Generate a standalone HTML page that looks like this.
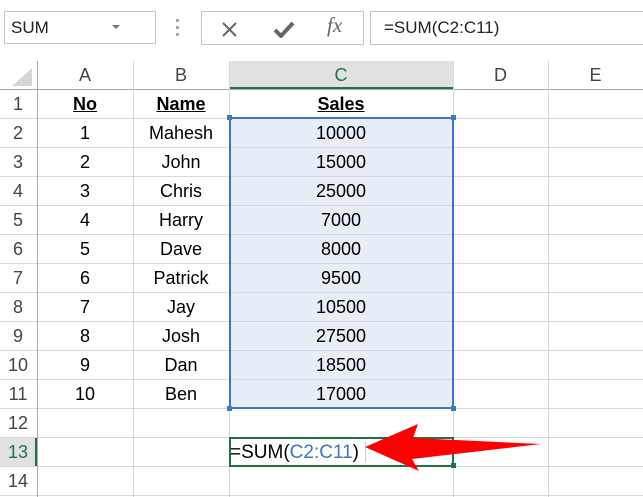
<!DOCTYPE html>
<html><head><style>
body{margin:0;width:643px;height:497px;background:#fff;position:relative;overflow:hidden;font-family:"Liberation Sans",sans-serif}
.a{position:absolute}
.c{position:absolute;text-align:center;font-size:18px;color:#000;height:29px;line-height:31px}
.rh{position:absolute;left:0;width:36px;text-align:center;font-size:18px;color:#444;height:29px;line-height:30px}
.ch{position:absolute;top:61px;height:28px;line-height:29px;text-align:center;font-size:18px;color:#444}
.h{position:absolute;left:0;width:643px;height:1px;background:#d8d8d8}
.v{position:absolute;top:61px;height:436px;width:1px;background:#d8d8d8}
b{text-decoration:underline}
</style></head><body>
<div class="a" style="left:4px;top:11px;width:152px;height:33px;border:1px solid #c6c6c6;box-sizing:border-box;font-size:17px;line-height:31px;padding-left:6px;color:#222">SUM</div>
<div class="a" style="left:112px;top:25px;width:0;height:0;border-left:4px solid transparent;border-right:4px solid transparent;border-top:4px solid #777"></div>
<div class="a" style="left:176px;top:19px;width:3px;height:18px;background:repeating-linear-gradient(#aaa 0 3px,transparent 3px 7px)"></div>
<div class="a" style="left:201px;top:11px;width:163px;height:34px;border:1px solid #c6c6c6;box-sizing:border-box"></div>
<svg class="a" style="left:220px;top:20px" width="20" height="18"><path d="M3 3L16 16M16 3L3 16" stroke="#666" stroke-width="2"/></svg>
<svg class="a" style="left:272px;top:20px" width="24" height="18"><path d="M3 10L9 16L21 3" stroke="#666" stroke-width="4" fill="none"/></svg>
<div class="a" style="left:327px;top:13px;font-family:'Liberation Serif',serif;font-style:italic;font-size:21px;color:#666">fx</div>
<div class="a" style="left:370px;top:11px;width:290px;height:34px;border:1px solid #c6c6c6;box-sizing:border-box;font-size:17px;line-height:32px;padding-left:13px;color:#222">=SUM(C2:C11)</div>

<div class="a" style="left:229px;top:118px;width:224px;height:291px;background:#e8eef7"></div>
<div class="a" style="left:229px;top:61px;width:224px;height:28px;background:#e1e1e1"></div>
<div class="a" style="left:229px;top:87px;width:224px;height:2px;background:#217346"></div>
<div class="a" style="left:0;top:437px;width:36px;height:29px;background:#e1e1e1"></div>
<div class="a" style="left:35px;top:437px;width:2px;height:29px;background:#217346"></div>
<svg class="a" style="left:10px;top:66px" width="24" height="22"><path d="M22 2V20H2Z" fill="#d6d6d6"/></svg>

<div class="h" style="top:89px;background:#a9a9a9"></div>
<div class="h" style="top:118px"></div><div class="h" style="top:147px"></div><div class="h" style="top:176px"></div><div class="h" style="top:205px"></div><div class="h" style="top:234px"></div><div class="h" style="top:263px"></div><div class="h" style="top:292px"></div><div class="h" style="top:321px"></div><div class="h" style="top:350px"></div><div class="h" style="top:379px"></div><div class="h" style="top:408px"></div><div class="h" style="top:437px"></div><div class="h" style="top:466px"></div><div class="h" style="top:495px"></div>
<div class="v" style="left:37px;background:#a9a9a9"></div><div class="v" style="left:133px"></div><div class="v" style="left:229px"></div><div class="v" style="left:453px"></div><div class="v" style="left:548px"></div>

<div class="ch" style="left:37px;width:96px">A</div>
<div class="ch" style="left:133px;width:96px">B</div>
<div class="ch" style="left:229px;width:224px;color:#217346">C</div>
<div class="ch" style="left:453px;width:95px">D</div>
<div class="ch" style="left:548px;width:95px">E</div>

<div class="rh" style="top:89px">1</div><div class="rh" style="top:118px">2</div><div class="rh" style="top:147px">3</div><div class="rh" style="top:176px">4</div><div class="rh" style="top:205px">5</div><div class="rh" style="top:234px">6</div><div class="rh" style="top:263px">7</div><div class="rh" style="top:292px">8</div><div class="rh" style="top:321px">9</div><div class="rh" style="top:350px">10</div><div class="rh" style="top:379px">11</div><div class="rh" style="top:408px">12</div><div class="rh" style="top:437px;color:#217346">13</div><div class="rh" style="top:466px">14</div>

<div class="c" style="left:37px;width:96px;top:89px"><b>No</b></div>
<div class="c" style="left:133px;width:96px;top:89px"><b>Name</b></div>
<div class="c" style="left:229px;width:224px;top:89px"><b>Sales</b></div>

<div class="c" style="left:37px;width:96px;top:118px">1</div><div class="c" style="left:133px;width:96px;top:118px">Mahesh</div><div class="c" style="left:229px;width:224px;top:118px">10000</div>
<div class="c" style="left:37px;width:96px;top:147px">2</div><div class="c" style="left:133px;width:96px;top:147px">John</div><div class="c" style="left:229px;width:224px;top:147px">15000</div>
<div class="c" style="left:37px;width:96px;top:176px">3</div><div class="c" style="left:133px;width:96px;top:176px">Chris</div><div class="c" style="left:229px;width:224px;top:176px">25000</div>
<div class="c" style="left:37px;width:96px;top:205px">4</div><div class="c" style="left:133px;width:96px;top:205px">Harry</div><div class="c" style="left:229px;width:224px;top:205px">7000</div>
<div class="c" style="left:37px;width:96px;top:234px">5</div><div class="c" style="left:133px;width:96px;top:234px">Dave</div><div class="c" style="left:229px;width:224px;top:234px">8000</div>
<div class="c" style="left:37px;width:96px;top:263px">6</div><div class="c" style="left:133px;width:96px;top:263px">Patrick</div><div class="c" style="left:229px;width:224px;top:263px">9500</div>
<div class="c" style="left:37px;width:96px;top:292px">7</div><div class="c" style="left:133px;width:96px;top:292px">Jay</div><div class="c" style="left:229px;width:224px;top:292px">10500</div>
<div class="c" style="left:37px;width:96px;top:321px">8</div><div class="c" style="left:133px;width:96px;top:321px">Josh</div><div class="c" style="left:229px;width:224px;top:321px">27500</div>
<div class="c" style="left:37px;width:96px;top:350px">9</div><div class="c" style="left:133px;width:96px;top:350px">Dan</div><div class="c" style="left:229px;width:224px;top:350px">18500</div>
<div class="c" style="left:37px;width:96px;top:379px">10</div><div class="c" style="left:133px;width:96px;top:379px">Ben</div><div class="c" style="left:229px;width:224px;top:379px">17000</div>

<div class="a" style="left:229px;top:117px;width:225px;height:292px;border:2px solid #3f74cf;box-sizing:border-box"></div>
<div class="a" style="left:227px;top:115px;width:5px;height:5px;background:#3f74cf"></div>
<div class="a" style="left:451px;top:115px;width:5px;height:5px;background:#3f74cf"></div>
<div class="a" style="left:227px;top:406px;width:5px;height:5px;background:#3f74cf"></div>
<div class="a" style="left:451px;top:406px;width:5px;height:5px;background:#3f74cf"></div>

<div class="a" style="left:229px;top:437px;width:225px;height:30px;border:2px solid #217346;box-sizing:border-box;background:#fff"></div>
<div class="a" style="left:451px;top:463px;width:5px;height:5px;background:#217346"></div>
<div class="a" style="left:230px;top:437px;height:30px;line-height:31px;font-size:19px;color:#000">=SUM(<span style="color:#3f74cf">C2:C11</span>)</div>
<div class="a" style="left:365px;top:442px;width:1px;height:20px;background:#ccc"></div>

<svg class="a" style="left:0;top:0" width="643" height="497"><polygon points="365,447 418,424 413,438 541,444 412,459 419,471" fill="#ff0000"/></svg>
</body></html>
